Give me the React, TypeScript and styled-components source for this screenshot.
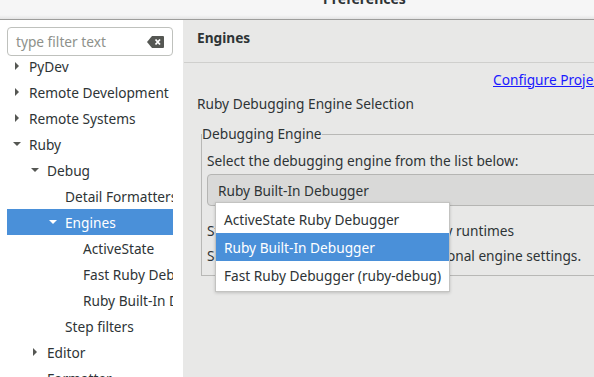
import React from "react";
import styled, { createGlobalStyle } from "styled-components";

const GlobalStyle = createGlobalStyle`
  html, body {
    margin: 0;
    padding: 0;
    width: 594px;
    height: 377px;
    overflow: hidden;
    font-family: "Noto Sans", "Open Sans", sans-serif;
    font-size: 13.7px;
    color: #2e3436;
  }
`;

const Window = styled.div`
  width: 594px;
  height: 377px;
  display: flex;
  flex-direction: column;
  overflow: hidden;
`;

const TitleBar = styled.div`
  height: 19px;
  flex: none;
  background: linear-gradient(#f6f6f6, #f6f6f6 15px, #e4e4e4);
  border-bottom: 1px solid #9d9d9b;
  overflow: hidden;
  padding-left: 323px;
`;

const TitleText = styled.div`
  font-weight: bold;
  font-size: 14px;
  line-height: 19px;
  margin-top: -11px;
  color: #2e3436;
`;

const Body = styled.div`
  flex: 1;
  display: flex;
  min-height: 0;
`;

const Sidebar = styled.div`
  width: 166px;
  flex: none;
  background: #ffffff;
  padding: 7px 10px 0 7px;
  display: flex;
  flex-direction: column;
  gap: 4px;
  overflow: hidden;
`;

const FilterBox = styled.div`
  height: 27px;
  flex: none;
  border: 1px solid #bfc1bd;
  border-radius: 4px;
  display: flex;
  align-items: center;
  padding: 0 8px 0 8px;
  gap: 6px;
`;

const FilterPlaceholder = styled.span`
  flex: 1;
  color: #8e918b;
  white-space: nowrap;
`;

const Tree = styled.div`
  flex: 1;
  overflow: hidden;
`;

const TreeScroll = styled.div`
  margin-top: -7px;
`;

const Row = styled.div<{ $level: number; $selected?: boolean }>`
  height: 26px;
  display: flex;
  align-items: center;
  padding-left: ${(p) => 2 + p.$level * 18}px;
  white-space: nowrap;
  overflow: hidden;
  background: ${(p) => (p.$selected ? "#4a90d9" : "transparent")};
  color: ${(p) => (p.$selected ? "#ffffff" : "#2e3436")};
`;

const ArrowCell = styled.span`
  width: 16px;
  height: 16px;
  flex: none;
  margin-right: 4px;
  display: flex;
  align-items: center;
  justify-content: center;
`;

const Main = styled.div`
  flex: 1;
  background: #e8e8e7;
  overflow: hidden;
`;

const Header = styled.div`
  height: 34px;
  border-bottom: 1px solid #cfcfcd;
  margin-left: 1px;
  padding: 8px 0 0 13px;
  line-height: 20px;
  font-weight: bold;
`;

const Content = styled.div`
  width: 640px;
  padding: 4px 0 0 14px;
  display: flex;
  flex-direction: column;
`;

const LinkRow = styled.div`
  height: 24px;
  display: flex;
  align-items: center;
  padding-left: 296px;
  white-space: nowrap;
`;

const Link = styled.a`
  color: #1a1aff;
  text-decoration: underline;
`;

const Label = styled.div`
  height: 24px;
  display: flex;
  align-items: center;
  white-space: nowrap;
`;

const Group = styled.fieldset`
  margin: 9px 0 0 4px;
  padding: 0 0 7px 0;
  border: 1px solid #b8b8b6;
  min-width: 0;
`;

const Legend = styled.legend`
  padding: 0;
  line-height: 20px;
`;

const GroupBody = styled.div`
  padding: 4px 0 0 5px;
  display: flex;
  flex-direction: column;
`;

const ComboWrap = styled.div`
  position: relative;
  margin-top: 2px;
  margin-bottom: 12px;
`;

const Combo = styled.div`
  height: 30px;
  border: 1px solid #b5b5b3;
  border-radius: 4px;
  background: #d9d9d8;
  display: flex;
  align-items: center;
  padding-left: 10px;
  white-space: nowrap;
`;

const HintLine = styled.div`
  height: 25px;
  display: flex;
  align-items: center;
  white-space: nowrap;
`;

const Popup = styled.div`
  position: absolute;
  left: 8px;
  top: 28px;
  width: 233px;
  padding: 2px 0;
  background: #ffffff;
  border: 1px solid #c3c3c1;
  box-shadow: 0 1px 3px rgba(0, 0, 0, 0.18);
  display: flex;
  flex-direction: column;
  z-index: 2;
`;

const PopupItem = styled.div<{ $active?: boolean }>`
  height: 28px;
  display: flex;
  align-items: center;
  padding-left: 8px;
  white-space: nowrap;
  background: ${(p) => (p.$active ? "#4a90d9" : "#ffffff")};
  color: ${(p) => (p.$active ? "#ffffff" : "#2e3436")};
`;

type Arrow = "right" | "down" | undefined;

const TreeArrow = ({ dir, light }: { dir: Arrow; light?: boolean }) => {
  const fill = light ? "#ffffff" : "#555753";
  if (!dir) return <ArrowCell />;
  return (
    <ArrowCell>
      <svg width="16" height="16" viewBox="0 0 16 16">
        {dir === "right" ? (
          <polygon points="6,4 10,8 6,12" fill={fill} />
        ) : (
          <polygon points="4,6 12,6 8,10" fill={fill} />
        )}
      </svg>
    </ArrowCell>
  );
};

const ClearIcon = () => (
  <svg width="17" height="12" viewBox="0 0 17 12">
    <path d="M5 0 H16 a1 1 0 0 1 1 1 V11 a1 1 0 0 1 -1 1 H5 L0 6 Z" fill="#555753" />
    <path d="M8.5 3.5 L13 8.5 M13 3.5 L8.5 8.5" stroke="#ffffff" strokeWidth="1.8" />
  </svg>
);

const treeItems: { label: string; level: number; arrow?: Arrow; selected?: boolean }[] = [
  { label: "PyDev", level: 0, arrow: "right" },
  { label: "Remote Development", level: 0, arrow: "right" },
  { label: "Remote Systems", level: 0, arrow: "right" },
  { label: "Ruby", level: 0, arrow: "down" },
  { label: "Debug", level: 1, arrow: "down" },
  { label: "Detail Formatters", level: 2 },
  { label: "Engines", level: 2, arrow: "down", selected: true },
  { label: "ActiveState", level: 3 },
  { label: "Fast Ruby Debugger (ruby-debug)", level: 3 },
  { label: "Ruby Built-In Debugger", level: 3 },
  { label: "Step filters", level: 2 },
  { label: "Editor", level: 1, arrow: "right" },
  { label: "Formatter", level: 1 },
];

const engines = [
  "ActiveState Ruby Debugger",
  "Ruby Built-In Debugger",
  "Fast Ruby Debugger (ruby-debug)",
];

export default function App() {
  return (
    <Window>
      <GlobalStyle />
      <TitleBar>
        <TitleText>Preferences</TitleText>
      </TitleBar>
      <Body>
        <Sidebar>
          <FilterBox>
            <FilterPlaceholder>type filter text</FilterPlaceholder>
            <ClearIcon />
          </FilterBox>
          <Tree>
            <TreeScroll>
              {treeItems.map((item) => (
                <Row key={item.label} $level={item.level} $selected={item.selected}>
                  <TreeArrow dir={item.arrow} light={item.selected} />
                  {item.label}
                </Row>
              ))}
            </TreeScroll>
          </Tree>
        </Sidebar>
        <Main>
          <Header>Engines</Header>
          <Content>
            <LinkRow>
              <Link>Configure Project Specific Settings...</Link>
            </LinkRow>
            <Label>Ruby Debugging Engine Selection</Label>
            <Group>
              <Legend>Debugging Engine</Legend>
              <GroupBody>
                <Label>Select the debugging engine from the list below:</Label>
                <ComboWrap>
                  <Combo>Ruby Built-In Debugger</Combo>
                  <Popup>
                    {engines.map((e) => (
                      <PopupItem key={e} $active={e === "Ruby Built-In Debugger"}>
                        {e}
                      </PopupItem>
                    ))}
                  </Popup>
                </ComboWrap>
                <HintLine>Standard debuggers, included in Ruby runtimes</HintLine>
                <HintLine>See these preference pages for additional engine settings.</HintLine>
              </GroupBody>
            </Group>
          </Content>
        </Main>
      </Body>
    </Window>
  );
}
